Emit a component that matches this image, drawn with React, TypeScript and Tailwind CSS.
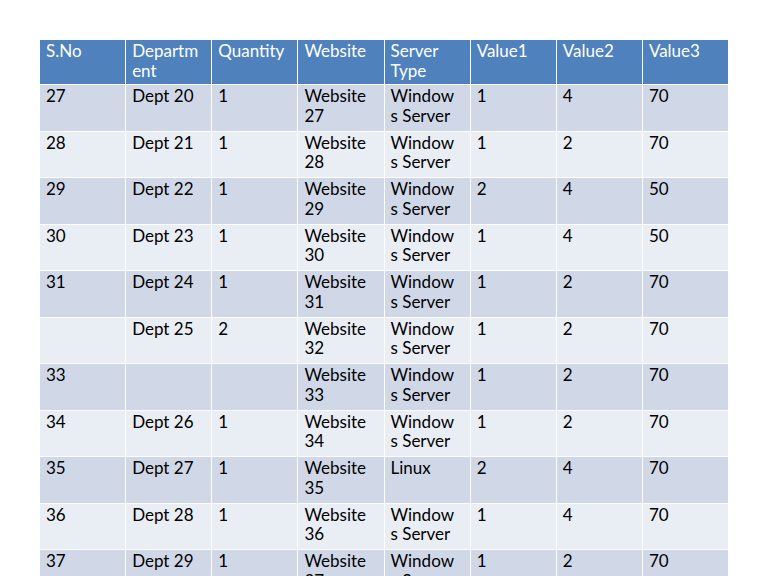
import React from "react";

const headers = ["S.No", "Departm\nent", "Quantity", "Website", "Server\nType", "Value1", "Value2", "Value3"];

const win = "Window\ns Server";

const rows = [
  ["27", "Dept 20", "1", "Website\n27", win, "1", "4", "70"],
  ["28", "Dept 21", "1", "Website\n28", win, "1", "2", "70"],
  ["29", "Dept 22", "1", "Website\n29", win, "2", "4", "50"],
  ["30", "Dept 23", "1", "Website\n30", win, "1", "4", "50"],
  ["31", "Dept 24", "1", "Website\n31", win, "1", "2", "70"],
  ["", "Dept 25", "2", "Website\n32", win, "1", "2", "70"],
  ["33", "", "", "Website\n33", win, "1", "2", "70"],
  ["34", "Dept 26", "1", "Website\n34", win, "1", "2", "70"],
  ["35", "Dept 27", "1", "Website\n35", "Linux", "2", "4", "70"],
  ["36", "Dept 28", "1", "Website\n36", win, "1", "4", "70"],
  ["37", "Dept 29", "1", "Website\n37", win, "1", "2", "70"],
];

export default function App() {
  return (
    <div className="w-[768px] h-[576px] overflow-hidden bg-white font-['Lato',sans-serif] text-[17px] leading-[19.5px]">
      <div className="pl-[39px] pt-[39px]">
        <table className="w-[690px] table-fixed border-collapse">
          <thead>
            <tr className="h-[45px] bg-[#4f81bd] text-white">
              {headers.map((h) => (
                <th
                  key={h}
                  className="border border-white pl-[6px] pr-[4px] pt-[1px] text-left align-top font-normal whitespace-pre-line"
                >
                  {h}
                </th>
              ))}
            </tr>
          </thead>
          <tbody>
            {rows.map((r, i) => (
              <tr key={i} className={`h-[46.5px] ${i % 2 === 0 ? "bg-[#d0d8e8]" : "bg-[#e9edf4]"} text-black`}>
                {r.map((c, j) => (
                  <td
                    key={j}
                    className="border border-white pl-[6px] pr-[4px] pt-[1px] align-top whitespace-pre-line"
                  >
                    {c}
                  </td>
                ))}
              </tr>
            ))}
          </tbody>
        </table>
      </div>
    </div>
  );
}
